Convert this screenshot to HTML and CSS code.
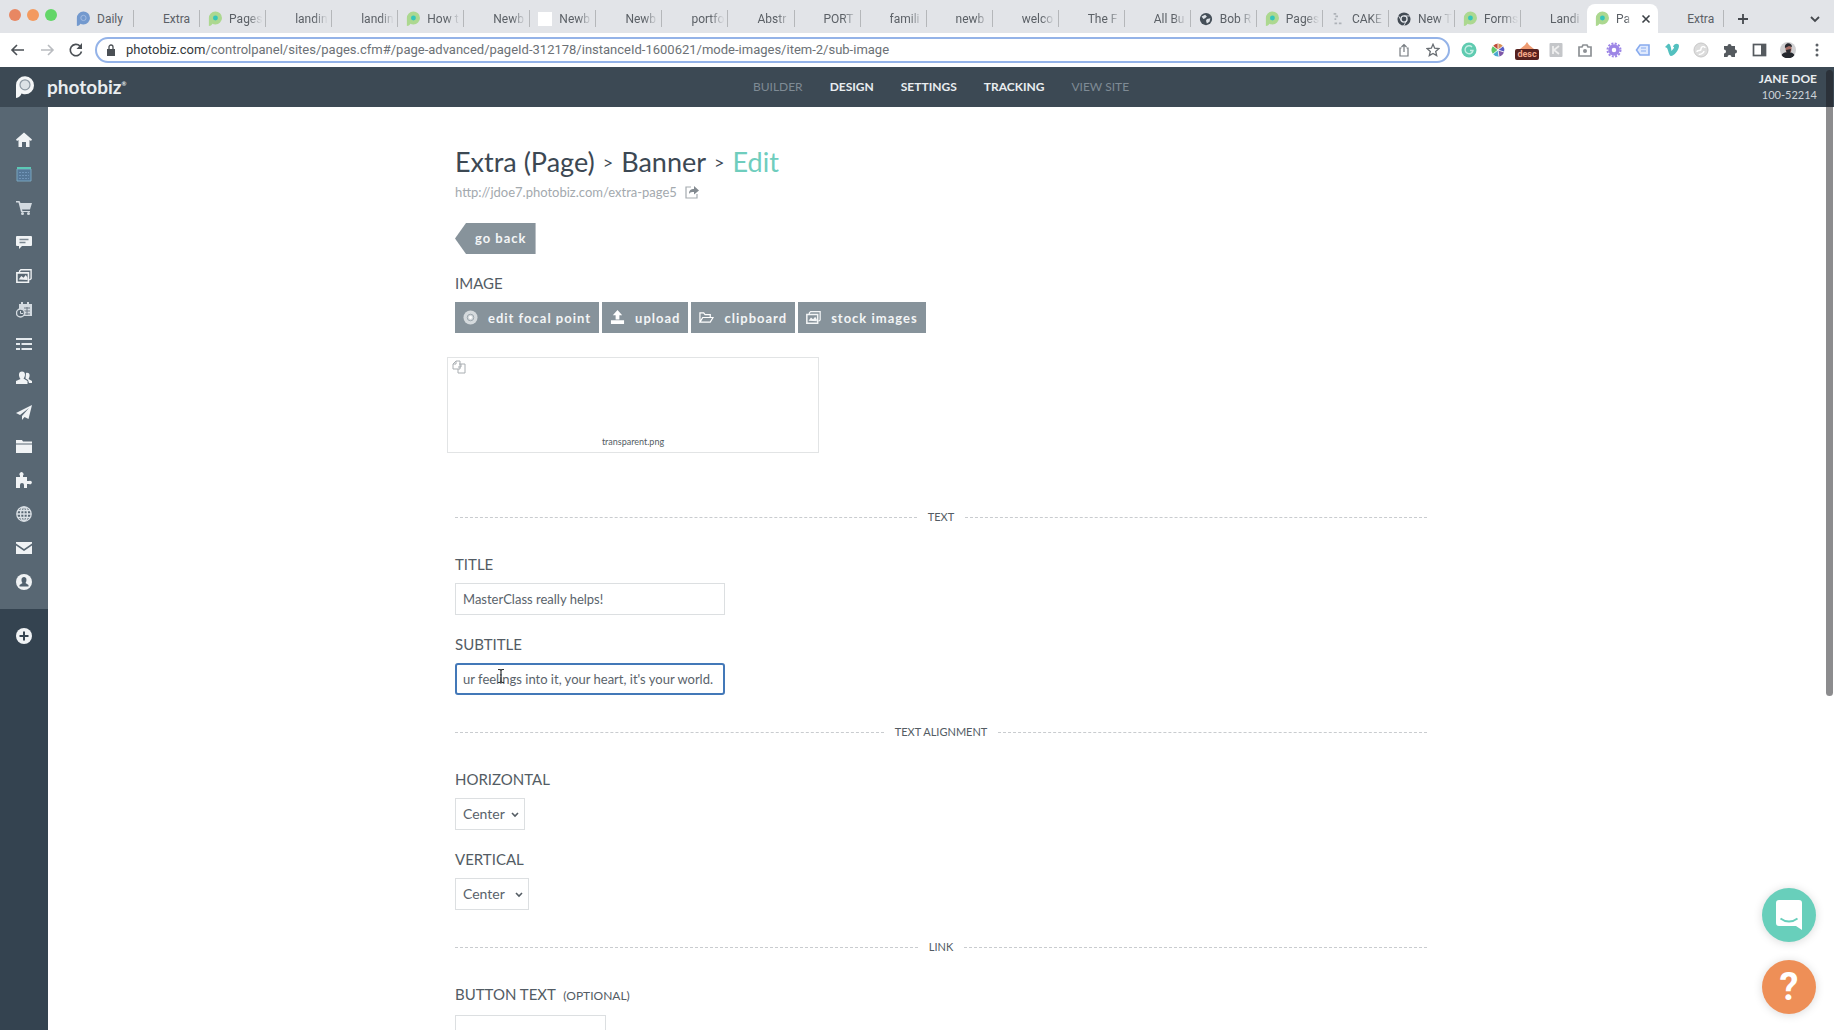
FILE: index.html
```html
<!DOCTYPE html>
<html lang="en">
<head>
<meta charset="utf-8">
<title>Pages - photobiz</title>
<link rel="stylesheet" href="styles.css">
</head>
<body>
<svg class="sprite" aria-hidden="true">
  <symbol id="pin" viewBox="0 0 16 18"><path d="M1 17V8a7.500 7.500 0 1 1 7.500 7.300c-1.500 0-2.500-.4-3.500-.9C4 16 3 17 1 17z" fill="#acd890"/><circle cx="8.500" cy="7.800" r="2.800" fill="#35c6ba"/></symbol>
  <symbol id="pictures" viewBox="0 0 18 18"><path d="M4 5V3.500L5.500 2H17v10l-2 1.500" fill="none" stroke="currentColor" stroke-width="1.500"/><path d="M1 5.500h13V16H1z" fill="none" stroke="currentColor" stroke-width="1.800"/><path d="M3 13l3-4 2.500 2L11 8l2 3v2.500z" fill="currentColor"/></symbol>
  <symbol id="target" viewBox="0 0 16 16"><circle cx="8" cy="8" r="7.500" fill="#d5dadd"/><circle cx="8" cy="8" r="3.500" fill="none" stroke="#98a2a9"/><circle cx="8" cy="8" r="1.500" fill="#fff"/></symbol>
</svg>

<div class="tab-strip">
  <div class="lights"><span class="light red"></span><span class="light amber"></span><span class="light green"></span></div>
  <div class="tabs">
    <div class="tab"><svg class="fav" viewBox="0 0 16 18"><path d="M1 17V8a7.500 7.500 0 1 1 7.500 7.300c-1.500 0-2.500-.4-3.500-.9C4 16 3 17 1 17z" fill="#7399ce"/><circle cx="8.500" cy="7.800" r="3" fill="none" stroke="#a8bfe2"/></svg><span class="name whole">Daily</span></div>
    <div class="tab"><span class="fav"></span><span class="name whole">Extra</span></div>
    <div class="tab"><svg class="fav"><use href="#pin"/></svg><span class="name">Pages</span></div>
    <div class="tab"><span class="fav"></span><span class="name">landin</span></div>
    <div class="tab"><span class="fav"></span><span class="name">landin</span></div>
    <div class="tab"><svg class="fav"><use href="#pin"/></svg><span class="name">How t</span></div>
    <div class="tab"><span class="fav"></span><span class="name">Newb</span></div>
    <div class="tab"><span class="fav blank"></span><span class="name">Newb</span></div>
    <div class="tab"><span class="fav"></span><span class="name">Newb</span></div>
    <div class="tab"><span class="fav"></span><span class="name">portfo</span></div>
    <div class="tab"><span class="fav"></span><span class="name">Abstr</span></div>
    <div class="tab"><span class="fav"></span><span class="name">PORT</span></div>
    <div class="tab"><span class="fav"></span><span class="name">famili</span></div>
    <div class="tab"><span class="fav"></span><span class="name">newb</span></div>
    <div class="tab"><span class="fav"></span><span class="name">welco</span></div>
    <div class="tab"><span class="fav"></span><span class="name">The F</span></div>
    <div class="tab"><span class="fav"></span><span class="name">All Bu</span></div>
    <div class="tab"><svg class="fav" viewBox="0 0 16 16"><circle cx="8" cy="8" r="7" fill="#454f58"/><path d="M3 5l4-2 2 2-2 2-2 1zM9 8l4-1-1 4-3 2-1-3z" fill="#dfe3e8"/></svg><span class="name">Bob R</span></div>
    <div class="tab"><svg class="fav"><use href="#pin"/></svg><span class="name">Pages</span></div>
    <div class="tab"><svg class="fav" viewBox="0 0 16 16"><path d="M3 2h3M5 5h3M4 8h2M4 13h3M9 13h3" stroke="#aeb2b8" stroke-width="2"/></svg><span class="name">CAKE</span></div>
    <div class="tab"><svg class="fav" viewBox="0 0 16 16"><circle cx="8" cy="8" r="7.500" fill="#434b54"/><circle cx="8" cy="8" r="3.500" fill="none" stroke="#e1e4e9" stroke-width="1.500"/><path d="M8 4.500h7M5 10L1.500 4M11 10l-3.500 6" stroke="#e1e4e9"/></svg><span class="name">New T</span></div>
    <div class="tab"><svg class="fav"><use href="#pin"/></svg><span class="name">Forms</span></div>
    <div class="tab plain"><span class="fav"></span><span class="name">Landi</span></div>
    <div class="tab active"><svg class="fav"><use href="#pin"/></svg><span class="name">Pa</span><button class="icon-btn" aria-label="Close tab"><svg viewBox="0 0 10 10" width="10" height="10"><path d="M1.500 1.500l7 7M8.500 1.500l-7 7" stroke="#3d4247" stroke-width="1.600"/></svg></button></div>
    <div class="tab"><span class="fav"></span><span class="name whole">Extra</span></div>
  </div>
  <div class="strip-end">
    <button class="icon-btn" aria-label="New tab"><svg viewBox="0 0 12 12" width="12" height="12"><path d="M6 1v10M1 6h10" stroke="#45494e" stroke-width="1.800"/></svg></button>
    <button class="icon-btn" aria-label="Search tabs"><svg viewBox="0 0 12 12" width="12" height="12"><path d="M2 4l4 4 4-4" fill="none" stroke="#45494e" stroke-width="1.800"/></svg></button>
  </div>
</div>

<div class="toolbar">
  <div class="history">
    <button class="icon-btn" aria-label="Back"><svg viewBox="0 0 16 16" width="16" height="16"><path d="M14 8H2M7 3L2 8l5 5" fill="none" stroke="#4b5055" stroke-width="1.600"/></svg></button>
    <button class="icon-btn" aria-label="Forward"><svg viewBox="0 0 16 16" width="16" height="16"><path d="M2 8h12M9 3l5 5-5 5" fill="none" stroke="#b9bcc0" stroke-width="1.600"/></svg></button>
    <button class="icon-btn" aria-label="Reload"><svg viewBox="0 0 16 16" width="16" height="16"><path d="M13.500 9.500A5.700 5.700 0 1 1 12 4" fill="none" stroke="#4b5055" stroke-width="1.600"/><path d="M14 1v6H8.500z" fill="#4b5055"/></svg></button>
  </div>
  <div class="omnibox">
    <svg viewBox="0 0 10 12" width="10" height="12"><path d="M1 5h8v7H1z" fill="#4b5055"/><path d="M3 5V3a2 2 0 0 1 4 0v2" fill="none" stroke="#4b5055" stroke-width="1.300"/></svg>
    <span class="url"><b>photobiz.com</b>/controlpanel/sites/pages.cfm#/page-advanced/pageId-312178/instanceId-1600621/mode-images/item-2/sub-image</span>
    <button class="icon-btn" aria-label="Share"><svg viewBox="0 0 14 14" width="14" height="14"><path d="M4.500 5H3v8h8V5H9.500M7 9V1.500M4.500 4L7 1.500 9.500 4" fill="none" stroke="#777c81" stroke-width="1.200"/></svg></button>
    <button class="icon-btn" aria-label="Bookmark"><svg viewBox="0 0 14 14" width="14" height="14"><path d="M7 1.300l1.700 3.900 4.200.4-3.200 2.800 1 4.200L7 10.400l-3.700 2.200 1-4.200L1.100 5.600l4.200-.4z" fill="none" stroke="#696e73" stroke-width="1.300"/></svg></button>
  </div>
  <div class="extensions">
    <svg viewBox="0 0 16 16"><circle cx="8" cy="8" r="7.500" fill="#5fcbb0"/><path d="M11 5a4 4 0 1 0 1 3.500H9" fill="none" stroke="#c5eee4" stroke-width="1.400"/></svg>
    <svg viewBox="0 0 16 16"><path d="M8 8L3 4a6.500 6.500 0 0 1 5-2.500z" fill="#bf4b3a"/><path d="M8 8V1.500A6.500 6.500 0 0 1 13 4z" fill="#d99055"/><path d="M8 8l5-4a6.500 6.500 0 0 1 1 6z" fill="#595ec6"/><path d="M8 8l6 2a6.500 6.500 0 0 1-5 4.500z" fill="#7e58a8"/><path d="M8 8l1 6.500A6.500 6.500 0 0 1 3 12z" fill="#4ba8cf"/><path d="M8 8l-5 4a6.500 6.500 0 0 1 0-8z" fill="#60c669"/><path d="M8 1.500V8l5-4M3 4l5 4 6 2M3 12l5-4 1 6.500" fill="none" stroke="#fff" stroke-width=".8"/></svg>
    <span class="desc"><svg viewBox="0 0 16 16"><path d="M8 0l2 3 5 4v2H1V7l5-4z" fill="#ee9b72"/></svg><span class="desc-tag">desc</span></span>
    <svg viewBox="0 0 16 16"><rect x="1.500" y="1" width="13" height="14" rx="1" fill="#c4c6c9"/><path d="M5 4v8M11 4L6 8l5 4" fill="none" stroke="#eee" stroke-width="1.800"/></svg>
    <svg viewBox="0 0 16 16"><path d="M2 5h3l1-2h4l1 2h3v9H2z" fill="none" stroke="#8d9195" stroke-width="1.700"/><circle cx="8" cy="9" r="2" fill="#8d9195"/></svg>
    <svg viewBox="0 0 16 16"><circle cx="8" cy="8" r="6.500" fill="none" stroke="#9d86e6" stroke-width="2" stroke-dasharray="2 1.400"/><circle cx="8" cy="8" r="4" fill="none" stroke="#9d86e6" stroke-width="3.500"/></svg>
    <svg viewBox="0 0 16 16"><path d="M5 3h9v10H5L1.500 8z" fill="#dfe9fd" stroke="#88abee" stroke-width="1.600"/><path d="M6 6h5M6 9h5" stroke="#88abee"/></svg>
    <svg viewBox="0 0 16 16"><path d="M1 5l3-3c2-1 3 3 3.500 7C10 6 11 5 9 5c1-4 6-4 6-1 0 4-5 10-8 10-2 0-3-7-4-8z" fill="#53c0bf"/></svg>
    <svg viewBox="0 0 16 16"><circle cx="8" cy="8" r="7" fill="#dcdcdc" stroke="#c8c8c8"/><path d="M4 10c0-3 4 0 4-3s4-3 4-1M6 12c1 1 5-1 5-3" fill="none" stroke="#fff" stroke-width="1.400"/></svg>
    <svg viewBox="0 0 16 16"><path d="M2 4h3.500a2 2 0 1 1 4 0H13v3.500a2 2 0 1 1 0 4V15H9.500a2 2 0 0 0-4 0H2v-3.500a2 2 0 0 0 0-4z" fill="#555a5f"/></svg>
    <svg viewBox="0 0 16 16"><rect x="2.500" y="2.500" width="12" height="11" fill="none" stroke="#555a5f" stroke-width="1.700"/><path d="M10 2h5v12h-5z" fill="#555a5f"/></svg>
    <svg viewBox="0 0 16 16"><circle cx="8" cy="8" r="8" fill="#d0d0d2"/><path d="M1.500 13c2-4 11-4 13 0A8 8 0 0 1 1.500 13z" fill="#24272d"/><ellipse cx="8.500" cy="6.500" rx="3" ry="4.500" fill="#a76d64"/><path d="M5 6c-1-6 7-6 7-1L9 4zM6 8l5-1-1 4-3 1z" fill="#292a30"/></svg>
    <svg viewBox="0 0 16 16"><g fill="#5c6166"><circle cx="8" cy="3" r="1.500"/><circle cx="8" cy="8" r="1.500"/><circle cx="8" cy="13" r="1.500"/></g></svg>
  </div>
</div>

<div class="app">
  <header class="header">
    <a class="logo" href="#"><svg viewBox="0 0 20 24" width="20" height="24"><path d="M1 23V10a9 9 0 1 1 9 9.300c-1.500 0-2.500-.2-3.500-.7C5.500 21 4 23 1 23z" fill="#f4f6f7"/><circle cx="10" cy="9.800" r="5" fill="#dce2e6" stroke="#8c98a2" stroke-width="1.200"/></svg><span>photobiz<sup>®</sup></span></a>
    <nav class="menu"><a class="dim" href="#">BUILDER</a><a href="#">DESIGN</a><a href="#">SETTINGS</a><a href="#">TRACKING</a><a class="dim" href="#">VIEW SITE</a></nav>
    <div class="account"><b>JANE DOE</b><span>100-52214</span></div>
  </header>

  <div class="body">
    <aside class="sidebar">
      <nav class="side-main">
        <a href="#" aria-label="Home"><svg viewBox="0 0 16 16"><path d="M8 .5l8 7-1 1.500-1.500-1V15H10v-5H6v5H2.500V8L1 9 0 7.500z"/></svg></a>
        <a href="#" aria-label="Pages"><svg viewBox="0 0 16 16"><path d="M1 3h14v12H1z" fill="#557797" stroke="#79a6be"/><path d="M1 2h14" stroke="#5cc9b5" stroke-width="2"/><path d="M3 6.500h10M3 9.500h10M3 12.500h10" stroke="#7195b8" stroke-dasharray="2 1"/></svg></a>
        <a href="#" aria-label="Store"><svg viewBox="0 0 16 16" fill="#d3dae0"><path d="M0 1h3.500l1 2H16l-2 6.500H6l.5 1.500H14v1H5L2.500 2.500H0z"/><circle cx="6.500" cy="13.500" r="1.500"/><circle cx="12.500" cy="13.500" r="1.500"/></svg></a>
        <a href="#" aria-label="Blog"><svg viewBox="0 0 16 16"><path d="M1 2h14a1 1 0 0 1 1 1v8a1 1 0 0 1-1 1H6l-3 3v-3H1a1 1 0 0 1-1-1V3a1 1 0 0 1 1-1z"/><path d="M3.500 5.500h9M3.500 8.500h6" stroke="#7c8892" stroke-width="1.300"/></svg></a>
        <a href="#" aria-label="Galleries"><svg><use href="#pictures"/></svg></a>
        <a href="#" aria-label="Scheduler"><svg viewBox="0 0 16 16" fill="#d3dae0"><path d="M3 2h2V0h2v2h4V0h2v2h3v12H3z"/><path d="M8 6h6M8 9h6M8 12h6M11 5v8" stroke="#6c7984" stroke-width="1"/><circle cx="4.500" cy="11" r="4" fill="#586773" stroke="#d3dae0" stroke-width="1.400"/><path d="M4.500 9v2.500H7" fill="none" stroke="#d3dae0"/></svg></a>
        <a href="#" aria-label="Forms"><svg viewBox="0 0 16 16"><path d="M0 3h16M0 8h4M5.500 8H16M0 13h4M5.500 13H16" stroke="#e4e9ed" stroke-width="2"/></svg></a>
        <a href="#" aria-label="Clients"><svg viewBox="0 0 16 16"><path d="M6 1.500c4 0 3.500 5 1.500 7l4 2.500v3H0v-3l4.500-2C2.500 6.500 2 1.500 6 1.500z"/><path d="M10 3c4-1 4.500 3 2.500 6l3.500 2v2h-3l-1-3-2.500-1.500z"/></svg></a>
        <a href="#" aria-label="Email marketing"><svg viewBox="0 0 16 16"><path d="M16 1L0 9l4 2 9-7-7 8v4l2.500-3 4 2z"/></svg></a>
        <a href="#" aria-label="Files"><svg viewBox="0 0 16 16"><path d="M0 2h6l1 1.500h9v2H0zM0 6.500h16V15H0z"/></svg></a>
        <a href="#" aria-label="Add-ons"><svg viewBox="0 0 16 16"><path d="M0 5h4V3.500a2 2 0 1 1 3 0V5h4v4h2a1.800 1.800 0 1 1 0 3h-2v4H8v-3a2 2 0 0 0-4 0v3H0z"/></svg></a>
        <a href="#" aria-label="Domains"><svg viewBox="0 0 16 16" fill="none" stroke="#dbe1e6" stroke-width="1.300"><circle cx="8" cy="8" r="7.200"/><ellipse cx="8" cy="8" rx="3.500" ry="7.200"/><path d="M8 1v14M1 8h14M2 4.500h12M2 11.500h12"/></svg></a>
        <a href="#" aria-label="Mail"><svg viewBox="0 0 16 16"><path d="M0 2h16v1.500L8 9 0 3.500zM0 5.500L8 11l8-5.500V14H0z"/></svg></a>
        <a href="#" aria-label="Account"><svg viewBox="0 0 16 16"><circle cx="8" cy="8" r="8"/><path d="M8 3c3 0 3 4 1.500 6l3 2v1.500h-9V11l3-2C5 7 5 3 8 3z" fill="#536370"/></svg></a>
      </nav>
      <a class="add" href="#" aria-label="Add"><svg viewBox="0 0 16 16"><circle cx="8" cy="8" r="8"/><path d="M8 3.500v9M3.500 8h9" stroke="#364552" stroke-width="2"/></svg></a>
    </aside>

    <main class="main">
      <form class="content">
        <h1>Extra (Page)<i>&gt;</i>Banner<i>&gt;</i><em>Edit</em></h1>
        <a class="page-url" href="#">http://jdoe7.photobiz.com/extra-page5<svg viewBox="0 0 14 14" width="14" height="14"><path d="M6 2H1v11h11V9" fill="none" stroke="#a5abb0" stroke-width="1.200"/><path d="M4 9c0-4 2-5 5-5V1l5 4.500-5 4V7c-2 0-4 0-5 2z" fill="#838a90"/></svg></a>
        <button type="button" class="back">go back</button>

        <h2 class="label">IMAGE</h2>
        <div class="actions">
          <button type="button"><svg><use href="#target"/></svg>edit focal point</button>
          <button type="button"><svg viewBox="0 0 16 16"><path d="M8 0l5 5.500h-3V10H6V5.500H3zM1 11h14v4H1z" fill="#fff"/></svg>upload</button>
          <button type="button"><svg viewBox="0 0 16 16"><path d="M1 13V3h4l1.500 2H12v3M1 13l3-5h11l-3 5z" fill="none" stroke="#fff" stroke-width="1.300"/></svg>clipboard</button>
          <button type="button"><svg><use href="#pictures"/></svg>stock images</button>
        </div>
        <figure class="preview">
          <svg viewBox="0 0 14 14" width="14" height="14"><path d="M7 4h6v9H6V9M4 1h4v8H1V4zM4 1v3H1M9 4v3H6" fill="none" stroke="#a9aeb2"/></svg>
          <figcaption>transparent.png</figcaption>
        </figure>

        <h3 class="divider first">TEXT</h3>
        <label class="label" for="title">TITLE</label>
        <input class="field" id="title" type="text" value="MasterClass really helps!">
        <label class="label next" for="subtitle">SUBTITLE</label>
        <div class="focus-wrap">
          <input class="field focused" id="subtitle" type="text" value="ur feelings into it, your heart, it's your world.">
          <svg class="cursor" viewBox="0 0 8 16" width="8" height="16"><path d="M1 1.500h2l1 1 1-1h2M4 2.500v11M1 14.500h2l1-1 1 1h2" fill="none" stroke="#333" stroke-width="1.200"/></svg>
        </div>

        <h3 class="divider">TEXT ALIGNMENT</h3>
        <label class="label" for="horizontal">HORIZONTAL</label>
        <div class="select"><select id="horizontal"><option>Center</option></select><svg viewBox="0 0 8 6" width="8" height="6"><path d="M1 1l3 3 3-3" fill="none" stroke="#555d64" stroke-width="1.600"/></svg></div>
        <label class="label next" for="vertical">VERTICAL</label>
        <div class="select wide"><select id="vertical"><option>Center</option></select><svg viewBox="0 0 8 6" width="8" height="6"><path d="M1 1l3 3 3-3" fill="none" stroke="#555d64" stroke-width="1.600"/></svg></div>

        <h3 class="divider">LINK</h3>
        <label class="label" for="button-text">BUTTON TEXT <small>(OPTIONAL)</small></label>
        <input class="field short" id="button-text" type="text">
      </form>
    </main>
  </div>
  <div class="scroll-thumb"></div>
  <div class="floating">
    <button class="chat" aria-label="Chat"><svg viewBox="0 0 26 30" width="26" height="30"><path d="M3 0h20a3 3 0 0 1 3 3v27l-6-4H3a3 3 0 0 1-3-3V3a3 3 0 0 1 3-3z" fill="#fff"/><path d="M4.500 18.500c5 4 12 4 17 0" fill="none" stroke="#68cfbb" stroke-width="1.800"/></svg></button>
    <button class="help" aria-label="Help">?</button>
  </div>
</div>
</body>
</html>
```
FILE: styles.css
```css
* { box-sizing: border-box; }

body {
  margin: 0;
  height: 100vh;
  display: flex;
  flex-direction: column;
  overflow: hidden;
  background: #fff;
  color: #535c64;
  font: 13px/20px Lato, sans-serif;
}

a { color: inherit; text-decoration: none; }
button { font: inherit; border: 0; padding: 0; cursor: pointer; }
svg { flex: none; }
.sprite { position: absolute; width: 0; height: 0; }
.icon-btn { display: flex; background: none; }

/* Browser tabs */
.tab-strip {
  flex: none;
  display: flex;
  height: 33px;
  background: #e2e4e8;
  font: 12px/18px Roboto, sans-serif;
  color: #5b6066;
}
.lights { flex: none; display: flex; gap: 6px; width: 68px; padding: 9px 0 0 9px; }
.light { width: 12px; height: 12px; border-radius: 50%; }
.red { background: #e88763; }
.amber { background: #f39a5f; }
.green { background: #63d668; }
.tabs { flex: 1; min-width: 0; display: flex; padding-top: 4px; }
.tab {
  position: relative;
  flex: 1 1 0;
  min-width: 0;
  display: flex;
  align-items: center;
  gap: 7px;
  padding: 0 2px 0 8px;
}
.tab::after {
  content: "";
  position: absolute;
  right: 0;
  top: 6px;
  width: 1px;
  height: 17px;
  background: #b5b7ba;
}
.tab.active { padding-right: 7px; background: #fff; border-radius: 8px 8px 0 0; }
.tab.active::after { display: none; }
.tab.plain::after { display: none; }
.fav { flex: none; width: 14px; height: 16px; }
.fav.blank { height: 14px; background: #fff; }
.name {
  flex: 1;
  min-width: 0;
  white-space: nowrap;
  -webkit-mask-image: linear-gradient(to right, #000 55%, rgba(0, 0, 0, .1) 90%);
  mask-image: linear-gradient(to right, #000 55%, rgba(0, 0, 0, .1) 90%);
}
.name.whole { -webkit-mask-image: none; mask-image: none; }
.strip-end {
  flex: none;
  width: 110px;
  display: flex;
  justify-content: space-between;
  align-items: center;
  padding: 4px 13px 0;
}

/* Address bar */
.toolbar {
  flex: none;
  display: flex;
  align-items: center;
  height: 34px;
  padding: 0 9px 0 10px;
}
.history { display: flex; gap: 13px; width: 85px; }
.omnibox {
  flex: 1;
  min-width: 0;
  display: flex;
  align-items: center;
  gap: 10px;
  height: 26px;
  padding: 0 8px 0 9px;
  border: 2px solid #94b3e8;
  border-radius: 13px;
}
.omnibox .icon-btn { margin-left: 5px; }
.url {
  flex: 1;
  overflow: hidden;
  white-space: nowrap;
  font: 13px/20px Roboto, sans-serif;
  color: #6c7176;
}
.url b { font-weight: 400; color: #33373b; }
.extensions { display: flex; gap: 13px; margin-left: 11px; }
.extensions svg { display: block; width: 16px; height: 16px; }
.desc { position: relative; }
.desc-tag {
  position: absolute;
  left: -4px;
  top: 7px;
  width: 24px;
  border-radius: 2px;
  background: #56211f;
  color: #f3a688;
  font: bold 9px/11px Roboto, sans-serif;
  text-align: center;
}

/* Control panel */
.app {
  position: relative;
  flex: 1;
  min-height: 0;
  display: flex;
  flex-direction: column;
  overflow: hidden;
}
.header {
  flex: none;
  display: grid;
  grid-template-columns: 48px 1fr auto 1fr;
  align-items: center;
  height: 40px;
  background: #3c4954;
  color: #e9edf0;
}
.logo {
  grid-column: 1 / 3;
  display: flex;
  align-items: center;
  gap: 12px;
  padding-left: 15px;
  font-size: 19px;
  font-weight: 700;
}
.logo sup { font-size: 6px; line-height: 6px; vertical-align: 8px; }
.menu { display: flex; gap: 27px; font-size: 12px; font-weight: 700; }
.menu .dim { color: #7f8b95; font-weight: 400; }
.account {
  display: flex;
  flex-direction: column;
  align-items: flex-end;
  padding-right: 17px;
  font-size: 12px;
  line-height: 16px;
}
.account span { color: #ccd3d8; font-size: 11px; }
.body { flex: 1; min-height: 0; display: flex; }

.sidebar { flex: none; width: 48px; background: #344350; }
.side-main { padding: 16px 0 10px; background: #586773; }
.sidebar a {
  display: flex;
  align-items: center;
  justify-content: center;
  height: 34px;
  color: #f0f3f5;
}
.sidebar svg { width: 16px; height: 16px; }
.sidebar svg:not([fill]) { fill: currentColor; }
.sidebar .add { margin-top: 10px; }

.main { flex: 1; padding: 39px 24px 0; overflow: hidden; }
.content { max-width: 972px; margin: 0 auto; }

h1 {
  margin: 0;
  color: #3c4853;
  font-size: 27px;
  line-height: 32px;
  font-weight: 400;
}
h1 i { margin: 0 8px; font-size: 18px; font-style: normal; vertical-align: 3px; }
h1 em { font-style: normal; color: #6fcdbd; }
.page-url {
  display: flex;
  align-items: center;
  gap: 8px;
  margin: 4px 0 21px;
  color: #a3a9ae;
}
.back,
.actions button {
  height: 31px;
  background: #87939b;
  color: #f3f5f6;
  font-size: 13px;
  font-weight: 700;
  letter-spacing: 1px;
}
.back {
  display: block;
  padding: 0 9px 2px 20px;
  clip-path: polygon(0 50%, 11px 0, 100% 0, 100% 100%, 11px 100%);
}
.label {
  display: block;
  margin: 0 0 9px;
  font-size: 15px;
  line-height: 20px;
  font-weight: 400;
}
.back + .label, .label.next { margin-top: 19px; }
.label small { margin-left: 4px; font-size: 12px; }
.actions { display: flex; gap: 3px; }
.actions button {
  display: flex;
  align-items: center;
  gap: 10px;
  padding: 0 8px;
}
.actions svg { width: 15px; height: 15px; }
.preview {
  display: flex;
  flex-direction: column;
  justify-content: space-between;
  width: 372px;
  height: 96px;
  margin: 24px 0 0 -8px;
  padding: 2px 4px;
  border: 1px solid #e2e4e5;
}
.preview figcaption { text-align: center; font-size: 9px; line-height: 16px; }

.divider {
  display: flex;
  align-items: center;
  gap: 11px;
  margin: 27px 0;
  font-size: 11px;
  line-height: 20px;
  font-weight: 400;
}
.divider.first { margin-top: 54px; }
.divider::before, .divider::after {
  content: "";
  flex: 1;
  border-top: 1px dashed #c9cccf;
}

.field {
  display: block;
  width: 270px;
  height: 32px;
  padding: 0 7px;
  border: 1px solid #dcdfe1;
  background: #fff;
  color: #5a636b;
  font: 13px/20px Lato, sans-serif;
  outline: 0;
}
.field.short { width: 151px; }
.field.focused { border: 2px solid #4378b8; border-radius: 3px; padding: 0 6px; }
.focus-wrap { position: relative; width: 270px; }
.cursor { position: absolute; left: 42px; top: 5px; }
.select { position: relative; width: 70px; }
.select.wide { width: 74px; }
.select select {
  appearance: none;
  width: 100%;
  height: 32px;
  padding: 0 7px;
  border: 1px solid #dcdfe1;
  border-radius: 0;
  background: #fff;
  color: #5a636b;
  font: 14px/20px Lato, sans-serif;
}
.select svg { position: absolute; right: 6px; top: 14px; pointer-events: none; }

/* Overlays */
.scroll-thumb {
  position: absolute;
  top: 3px;
  right: 1px;
  width: 7px;
  height: 65%;
  border-radius: 4px;
  background: rgba(25, 25, 30, .5);
}
.floating {
  position: absolute;
  right: 18px;
  bottom: 16px;
  display: flex;
  flex-direction: column;
  gap: 18px;
}
.floating button {
  display: flex;
  align-items: center;
  justify-content: center;
  width: 54px;
  height: 54px;
  border-radius: 50%;
  box-shadow: 0 1px 10px rgba(0, 0, 0, .15);
}
.chat { background: #68cfbb; }
.help { background: #ee8f57; color: #fff; font: bold 38px/54px Roboto, sans-serif; }
```
